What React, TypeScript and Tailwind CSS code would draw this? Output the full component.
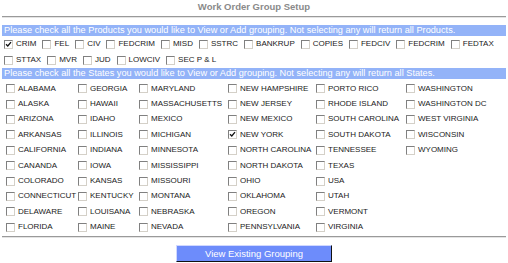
import React from "react";

const PRODUCTS_1 = ["CRIM", "FEL", "CIV", "FEDCRIM", "MISD", "SSTRC", "BANKRUP", "COPIES", "FEDCIV", "FEDCRIM", "FEDTAX"];
const PRODUCTS_2 = ["STTAX", "MVR", "JUD", "LOWCIV", "SEC P & L"];

const STATES = [
  "ALABAMA", "ALASKA", "ARIZONA", "ARKANSAS", "CALIFORNIA", "CANANDA", "COLORADO", "CONNECTICUT", "DELAWARE", "FLORIDA",
  "GEORGIA", "HAWAII", "IDAHO", "ILLINOIS", "INDIANA", "IOWA", "KANSAS", "KENTUCKY", "LOUISANA", "MAINE",
  "MARYLAND", "MASSACHUSETTS", "MEXICO", "MICHIGAN", "MINNESOTA", "MISSISSIPPI", "MISSOURI", "MONTANA", "NEBRASKA", "NEVADA",
  "NEW HAMPSHIRE", "NEW JERSEY", "NEW MEXICO", "NEW YORK", "NORTH CAROLINA", "NORTH DAKOTA", "OHIO", "OKLAHOMA", "OREGON", "PENNSYLVANIA",
  "PORTO RICO", "RHODE ISLAND", "SOUTH CAROLINA", "SOUTH DAKOTA", "TENNESSEE", "TEXAS", "USA", "UTAH", "VERMONT", "VIRGINIA",
  "WASHINGTON", "WASHINGTON DC", "WEST VIRGINIA", "WISCONSIN", "WYOMING",
];

function Box({ checked }: { checked?: boolean }) {
  return (
    <span className="relative inline-block h-[9px] w-[9px] shrink-0 border border-t-[#808080] border-l-[#808080] border-b-[#d4d0c8] border-r-[#d4d0c8] bg-white">
      {checked && (
        <svg viewBox="0 0 7 7" className="absolute left-0 top-0 h-[7px] w-[7px]">
          <path d="M1 3.2 L2.8 5 L6 1.2" fill="none" stroke="#111" strokeWidth="1.3" />
        </svg>
      )}
    </span>
  );
}

function Item({ label, checked }: { label: string; checked?: boolean }) {
  return (
    <span className="inline-flex items-center gap-[3px]">
      <Box checked={checked} />
      <span className="whitespace-nowrap text-[8px] leading-none text-[#1a1a1a]">{label}</span>
    </span>
  );
}

function Bar({ children }: { children: React.ReactNode }) {
  return (
    <div className="flex h-[11px] items-center whitespace-nowrap bg-[#93b3f8] pl-[2px] text-[9.2px] leading-none text-white">
      {children}
    </div>
  );
}

function Rule() {
  return <div className="h-[2px] border-t border-b border-t-[#9a9a9a] border-b-[#e4e4e4]" />;
}

export default function App() {
  return (
    <div className="h-[263px] w-[508px] overflow-hidden bg-white px-[2px] font-['Liberation_Sans',Arial,sans-serif]">
      <div className="flex h-[14px] items-center justify-center text-[9.5px] font-bold text-[#8a8a8a]">
        Work Order Group Setup
      </div>
      <div className="mt-[2px]">
        <Rule />
      </div>
      <div className="mt-[7px]">
        <Bar>
          Please check all the Products you would like to View or Add grouping. Not selecting any will return all Products.
        </Bar>
      </div>
      <div className="flex h-[16px] items-center gap-[6px] pl-[2px]">
        {PRODUCTS_1.map((p, i) => (
          <Item key={`p1-${i}`} label={p} checked={i === 0} />
        ))}
      </div>
      <div className="flex h-[16px] items-center gap-[6px] pl-[2px]">
        {PRODUCTS_2.map((p) => (
          <Item key={p} label={p} />
        ))}
      </div>
      <Bar>
        Please check all the States you would like to View or Add grouping. Not selecting any will return all States.
      </Bar>
      <div className="mt-[2px] grid grid-flow-col grid-cols-[72px_61px_89px_88px_90px_1fr] grid-rows-[repeat(10,15.4px)] pl-[4px]">
        {STATES.map((s) => (
          <div key={s} className="flex items-center">
            <Item label={s} checked={s === "NEW YORK"} />
          </div>
        ))}
      </div>
      <div className="mt-[1px]">
        <Rule />
      </div>
      <div className="mt-[7px] flex justify-center">
        <button className="flex h-[17px] w-[156px] items-center justify-center border border-t-[#d0d8ff] border-l-[#d0d8ff] border-b-[#111] border-r-[#111] bg-[#6d8cfb] text-[9.5px] leading-none text-white">
          View Existing Grouping
        </button>
      </div>
    </div>
  );
}
